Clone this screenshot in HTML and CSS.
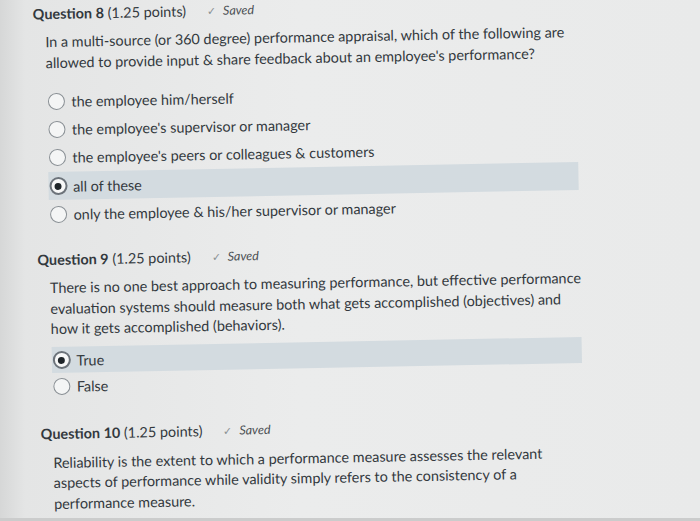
FILE: index.html
```html
<!DOCTYPE html>
<html lang="en">
<head>
    <meta charset="UTF-8">
    <meta name="viewport" content="width=device-width, initial-scale=1.0">
    <title>Quiz</title>
    <link rel="stylesheet" href="styles.css">
</head>
<body>
    <div class="page">

        <div class="question q8">
            <div class="qhead">
                <span class="qtitle"><b>Question 8</b> (1.25 points)</span>
                <span class="saved"><span class="tick">&#10003;</span> Saved</span>
            </div>
            <p class="qtext">In a multi-source (or 360 degree) performance appraisal, which of the following are<br>allowed to provide input &amp; share feedback about an employee's performance?</p>
            <div class="options">
                <div class="opt"><span class="radio"></span>the employee him/herself</div>
                <div class="opt"><span class="radio"></span>the employee's supervisor or manager</div>
                <div class="opt"><span class="radio"></span>the employee's peers or colleagues &amp; customers</div>
                <div class="opt picked"><span class="radio on"></span>all of these</div>
                <div class="opt"><span class="radio"></span>only the employee &amp; his/her supervisor or manager</div>
            </div>
        </div>

        <div class="question q9">
            <div class="qhead">
                <span class="qtitle"><b>Question 9</b> (1.25 points)</span>
                <span class="saved"><span class="tick">&#10003;</span> Saved</span>
            </div>
            <p class="qtext">There is no one best approach to measuring performance, but effective performance<br>evaluation systems should measure both what gets accomplished (objectives) and<br>how it gets accomplished (behaviors).</p>
            <div class="options">
                <div class="opt picked short"><span class="radio on"></span>True</div>
                <div class="opt short"><span class="radio"></span>False</div>
            </div>
        </div>

        <div class="question q10">
            <div class="qhead">
                <span class="qtitle"><b>Question 10</b> (1.25 points)</span>
                <span class="saved"><span class="tick">&#10003;</span> Saved</span>
            </div>
            <p class="qtext">Reliability is the extent to which a performance measure assesses the relevant<br>aspects of performance while validity simply refers to the consistency of a<br>performance measure.</p>
        </div>

    </div>
</body>
</html>
```

FILE: styles.css
```css
*{
    margin: 0;
    padding: 0;
    box-sizing: border-box;
}

body{
    width: 700px;
    height: 521px;
    overflow: hidden;
    font-family: Lato, "Open Sans", sans-serif;
    color: #33393e;
    background: linear-gradient(90deg, #d6d7d7 0px, #e4e5e5 25px, #ebecec 300px, #e9eaea 700px);
    border-bottom: 3px solid #cbcccc;
}

/* the photo of the screen is a little tilted */
.page{
    width: 720px;
    padding-top: 5px;
    padding-left: 32.5px;
    transform: rotate(-1.09deg);
    transform-origin: 0 0;
}

.qhead{
    display: flex;
    align-items: center;
    gap: 21px;
    height: 18px;
    font-size: 14.4px;
}
.qtitle b{
    font-weight: 700;
}
.saved{
    font-size: 12.5px;
    font-style: italic;
    color: #4a4f53;
}
.tick{
    font-style: normal;
    color: #8c9296;
    font-size: 11px;
    margin-right: 4px;
}

.qtext{
    margin-left: 12px;
    margin-top: 10px;
    font-size: 14.4px;
    line-height: 20.5px;
    white-space: nowrap;
}

.options{
    margin-left: 12px;
    margin-top: 14.5px;
    width: 530px;
}
.q9 .options{
    margin-top: 7px;
}

.opt{
    display: flex;
    align-items: center;
    gap: 7px;
    height: 28.2px;
    padding-left: 1px;
    font-size: 14.4px;
}
.opt.short{
    height: 26.5px;
}
.opt.picked{
    background-color: #d3dbe0;
}

.q9{ margin-top: 22px; }
.q10{ margin-top: 25px; }

.radio{
    width: 17px;
    height: 17px;
    border: 1px solid #8a9095;
    border-radius: 50%;
    background-color: #f4f5f5;
    display: flex;
    align-items: center;
    justify-content: center;
}
.radio.on{
    width: 18px;
    height: 18px;
    margin-right: -1px;
    border: 2px solid #6c737a;
    background-color: #f7f8f8;
}
.radio.on::after{
    content: "";
    width: 7px;
    height: 7px;
    border-radius: 50%;
    background-color: #1f2529;
}
```
